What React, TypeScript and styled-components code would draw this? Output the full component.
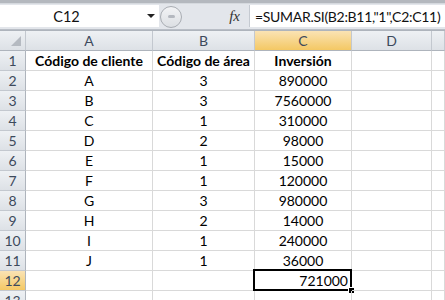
import React from 'react';
import styled, { createGlobalStyle } from 'styled-components';

const Global = createGlobalStyle`
  html, body { margin: 0; padding: 0; background: #fff; }
  body { font-family: Lato, "Open Sans", sans-serif; overflow: hidden; }
`

const Sheet = styled.div`
  width: 445px;
  height: 300px;
  overflow: hidden;
  background: #fff;
`

const TopStrip = styled.div`
  height: 3px;
  background: #b4b8be;
  border-bottom: 1px solid #d5d9de;
`

const FormulaBar = styled.div`
  display: flex;
  height: 25px;
  background: #e3e6eb;
  border-bottom: 1px solid #b9bec6;
`

const NameBox = styled.div`
  width: 159px;
  flex-shrink: 0;
  margin: 1px 0 2px;
  background: #fff;
  display: flex;
  align-items: center;
  font-size: 14.5px;
  color: #111;
`

const NameText = styled.span`
  flex: 1;
  text-align: center;
  padding-right: 14px;
`

const DropArrow = styled.span`
  width: 0;
  height: 0;
  margin-right: 4px;
  border-left: 4px solid transparent;
  border-right: 4px solid transparent;
  border-top: 4px solid #222;
`

const Middle = styled.div`
  width: 90px;
  flex-shrink: 0;
  display: flex;
  align-items: center;
  justify-content: space-between;
  padding: 0 9px 0 1px;
  box-sizing: border-box;
`

const Knob = styled.div`
  width: 22px;
  height: 22px;
  border-radius: 50%;
  background: linear-gradient(#f2f3f5, #dcdfe3);
  border: 1px solid #a9adb3;
  box-sizing: border-box;
  display: flex;
  align-items: center;
  justify-content: center;
  &::after {
    content: "";
    width: 7px;
    height: 3px;
    border-radius: 2px;
    background: #b4b8bf;
  }
`

const Fx = styled.span`
  font-family: "Liberation Serif", serif;
  font-style: italic;
  font-size: 15px;
  color: #333;
`

const FormulaInput = styled.div`
  flex: 1;
  min-width: 0;
  overflow: hidden;
  margin: 1px 0 2px;
  background: #fff;
  border-left: 1px solid #c5cad1;
  display: flex;
  align-items: center;
  padding-left: 5px;
  font-size: 14px;
  letter-spacing: -0.3px;
  color: #111;
  white-space: nowrap;
`

const Grid = styled.div`
  display: grid;
  grid-template-columns: 26px 127px 102px 97px 80px 1fr;
  grid-auto-rows: 20px;
  border-top: 1px solid #aeb4bc;
`

const HeaderCell = styled.div<{ $active?: boolean }>`
  box-sizing: border-box;
  display: flex;
  align-items: center;
  justify-content: center;
  font-size: 14px;
  color: #3d4a5c;
  background: ${p => p.$active
    ? 'linear-gradient(#fae3b4, #f4c864)'
    : 'linear-gradient(#eef1f4, #dde1e6)'};
  border-right: 1px solid #c3c8cf;
  border-bottom: 1px solid #aeb4bc;
`

const Corner = styled(HeaderCell)`
  justify-content: flex-end;
  align-items: flex-end;
  padding: 0 4px 4px 0;
  &::after {
    content: "";
    width: 0;
    height: 0;
    border-left: 10px solid transparent;
    border-bottom: 10px solid #b5bac1;
  }
`

const RowHead = styled(HeaderCell)`
  border-bottom-color: #c3c8cf;
  border-right-color: #aeb4bc;
`

const Cell = styled.div<{ $bold?: boolean; $align?: string }>`
  box-sizing: border-box;
  display: flex;
  align-items: center;
  justify-content: ${p => p.$align || 'center'};
  padding: 0 3px;
  font-size: 14px;
  font-weight: ${p => (p.$bold ? 700 : 400)};
  color: #000;
  border-right: 1px solid #d9d9d9;
  border-bottom: 1px solid #d9d9d9;
  white-space: nowrap;
  position: relative;
`

const Selection = styled.div`
  position: absolute;
  left: -2px;
  top: -2px;
  right: -1px;
  bottom: -1px;
  border: 2px solid #000;
  pointer-events: none;
  &::after {
    content: "";
    position: absolute;
    right: -5px;
    bottom: -5px;
    width: 5px;
    height: 5px;
    background: #000;
    border: 1px solid #fff;
  }
`

const data: [string, string, string][] = [
  ['A', '3', '890000'],
  ['B', '3', '7560000'],
  ['C', '1', '310000'],
  ['D', '2', '98000'],
  ['E', '1', '15000'],
  ['F', '1', '120000'],
  ['G', '3', '980000'],
  ['H', '2', '14000'],
  ['I', '1', '240000'],
  ['J', '1', '36000'],
]

const cols = ['A', 'B', 'C', 'D', '']

export default function App() {
  return (
    <Sheet>
      <Global />
      <TopStrip />
      <FormulaBar>
        <NameBox>
          <NameText>C12</NameText>
          <DropArrow />
        </NameBox>
        <Middle>
          <Knob />
          <Fx>fx</Fx>
        </Middle>
        <FormulaInput>=SUMAR.SI(B2:B11,"1",C2:C11)</FormulaInput>
      </FormulaBar>
      <Grid>
        <Corner />
        {cols.map(c => (
          <HeaderCell key={c || 'E'} $active={c === 'C'}>{c}</HeaderCell>
        ))}

        <RowHead>1</RowHead>
        <Cell $bold>Código de cliente</Cell>
        <Cell $bold>Código de área</Cell>
        <Cell $bold>Inversión</Cell>
        <Cell />
        <Cell />

        {data.map((r, i) => (
          <React.Fragment key={i}>
            <RowHead>{i + 2}</RowHead>
            <Cell>{r[0]}</Cell>
            <Cell>{r[1]}</Cell>
            <Cell>{r[2]}</Cell>
            <Cell />
            <Cell />
          </React.Fragment>
        ))}

        <RowHead $active>12</RowHead>
        <Cell />
        <Cell />
        <Cell $align="flex-end">
          721000
          <Selection />
        </Cell>
        <Cell />
        <Cell />

        <RowHead>13</RowHead>
        <Cell />
        <Cell />
        <Cell />
        <Cell />
        <Cell />
      </Grid>
    </Sheet>
  )
}
